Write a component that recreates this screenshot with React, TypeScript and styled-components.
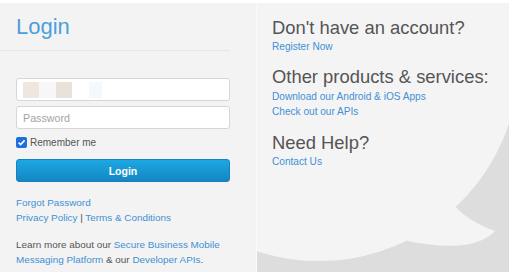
import styled, { createGlobalStyle } from "styled-components";

const Global = createGlobalStyle`
  html, body {
    margin: 0;
    background: #ffffff;
    font-family: "Liberation Sans", Arial, sans-serif;
  }
`;

const Page = styled.div`
  padding-top: 3px;
  width: 509px;
`;

const Frame = styled.div`
  display: flex;
  height: 269px;
`;

const LeftPanel = styled.div`
  width: 256px;
  background: #f3f3f3;
  padding-right: 26px;
  box-sizing: border-box;
`;

const Divider = styled.div`
  width: 1px;
  background: #fafafa;
`;

const RightPanel = styled.div`
  position: relative;
  flex: 1;
  background: #dddddd;
  overflow: hidden;
`;

const Bubble = styled.svg`
  position: absolute;
  left: 0;
  top: 0;
`;

const RightContent = styled.div`
  position: relative;
  padding: 14px 0 0 15px;
`;

const Header = styled.div`
  padding: 11px 0 10px 16px;
  border-bottom: 1px solid #e6e6e6;
`;

const Title = styled.h1`
  margin: 0;
  font-size: 22px;
  line-height: 26px;
  font-weight: 400;
  color: #4b9fdc;
`;

const Form = styled.div`
  padding: 27px 0 0 16px;
  display: flex;
  flex-direction: column;
`;

const Field = styled.div<{ $gap?: number }>`
  height: 23px;
  box-sizing: border-box;
  background: #ffffff;
  border: 1px solid #d6d6d6;
  border-radius: 3px;
  margin-bottom: ${(p) => p.$gap ?? 0}px;
  display: flex;
  align-items: center;
  padding-left: 6px;
  font-size: 10.7px;
  color: #a3a3a3;
`;

const Blur = styled.span<{ $color: string; $w: number }>`
  display: inline-block;
  width: ${(p) => p.$w}px;
  height: 16px;
  background: ${(p) => p.$color};
`;

const CheckRow = styled.label`
  display: flex;
  align-items: center;
  gap: 3px;
  margin-top: 7px;
  height: 13px;
  font-size: 10px;
  color: #555555;
`;

const Box = styled.span`
  width: 11px;
  height: 11px;
  border-radius: 2px;
  background: #1b6fe0;
  display: flex;
  align-items: center;
  justify-content: center;
`;

const Button = styled.button`
  margin-top: 10px;
  height: 23px;
  border: 1px solid #1582bf;
  border-radius: 3px;
  background: linear-gradient(#1ca8e3, #1486c2);
  color: #ffffff;
  font-family: inherit;
  font-weight: 700;
  font-size: 10.5px;
  padding: 0;
`;

const LinkBlock = styled.div<{ $top: number }>`
  margin-top: ${(p) => p.$top}px;
  font-size: 9.9px;
  line-height: 15px;
  color: #555555;
`;

const A = styled.a`
  color: #3f90d4;
  text-decoration: none;
`;

const Heading = styled.h2<{ $top?: number }>`
  margin: ${(p) => p.$top ?? 0}px 0 0;
  font-size: 18.4px;
  line-height: 21px;
  font-weight: 400;
  color: #555555;
`;

const LinkLine = styled.div<{ $top?: number }>`
  margin-top: ${(p) => p.$top ?? 0}px;
  font-size: 10.1px;
  line-height: 15px;
`;

export default function App() {
  return (
    <Page>
      <Global />
      <Frame>
        <LeftPanel>
          <Header>
            <Title>Login</Title>
          </Header>
          <Form>
            <Field $gap={5}>
              <Blur $color="#efe6df" $w={16} />
              <Blur $color="#f7f7f7" $w={17} />
              <Blur $color="#e8e2da" $w={16} />
              <Blur $color="#ffffff" $w={17} />
              <Blur $color="#f4f9fe" $w={13} />
            </Field>
            <Field>Password</Field>
            <CheckRow>
              <Box>
                <svg width="9" height="9" viewBox="0 0 10 10">
                  <path d="M1.8 5.2 L4 7.4 L8.4 2.6" fill="none" stroke="#fff" strokeWidth="1.8" />
                </svg>
              </Box>
              Remember me
            </CheckRow>
            <Button>Login</Button>
            <LinkBlock $top={13}>
              <A href="#">Forgot Password</A>
              <br />
              <A href="#">Privacy Policy</A> | <A href="#">Terms &amp; Conditions</A>
            </LinkBlock>
            <LinkBlock $top={12}>
              Learn more about our <A href="#">Secure Business Mobile Messaging Platform</A> &amp; our{" "}
              <A href="#">Developer APIs</A>.
            </LinkBlock>
          </Form>
        </LeftPanel>
        <Divider />
        <RightPanel>
          <Bubble width="252" height="269" viewBox="0 0 252 269">
            <circle cx="62" cy="58" r="200" fill="#f4f4f4" />
            <path d="M192 196 C205 214 222 222 238 228 C222 245 190 246 150 238 Z" fill="#f4f4f4" />
          </Bubble>
          <RightContent>
            <Heading>Don't have an account?</Heading>
            <LinkLine $top={1}>
              <A href="#">Register Now</A>
            </LinkLine>
            <Heading $top={12}>Other products &amp; services:</Heading>
            <LinkLine $top={2}>
              <A href="#">Download our Android &amp; iOS Apps</A>
            </LinkLine>
            <LinkLine>
              <A href="#">Check out our APIs</A>
            </LinkLine>
            <Heading $top={13}>Need Help?</Heading>
            <LinkLine $top={1}>
              <A href="#">Contact Us</A>
            </LinkLine>
          </RightContent>
        </RightPanel>
      </Frame>
    </Page>
  );
}
